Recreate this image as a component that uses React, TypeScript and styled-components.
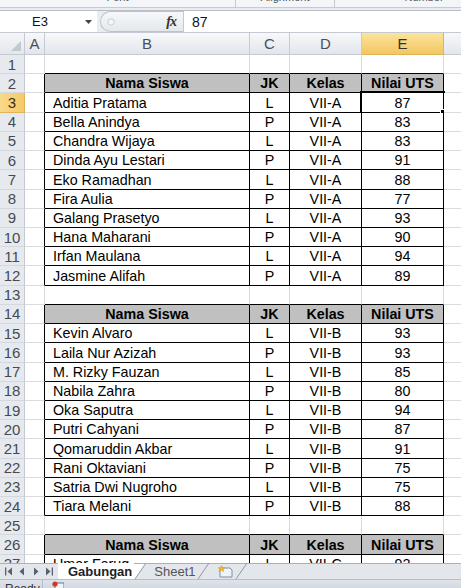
import React from "react";
import styled, { createGlobalStyle } from "styled-components";

const GlobalStyle = createGlobalStyle`
  html, body {
    margin: 0;
    padding: 0;
    background: #fff;
  }
  body {
    font-family: "Liberation Sans", Arial, sans-serif;
  }
`;

type RowKind = "blank" | "head" | "data";

interface SheetRow {
  kind: RowKind;
  cells?: string[];
}

const HEAD = ["Nama Siswa", "JK", "Kelas", "Nilai UTS"];

const kelasA: [string, string, string][] = [
  ["Aditia Pratama", "L", "87"],
  ["Bella Anindya", "P", "83"],
  ["Chandra Wijaya", "L", "83"],
  ["Dinda Ayu Lestari", "P", "91"],
  ["Eko Ramadhan", "L", "88"],
  ["Fira Aulia", "P", "77"],
  ["Galang Prasetyo", "L", "93"],
  ["Hana Maharani", "P", "90"],
  ["Irfan Maulana", "L", "94"],
  ["Jasmine Alifah", "P", "89"],
];

const kelasB: [string, string, string][] = [
  ["Kevin Alvaro", "L", "93"],
  ["Laila Nur Azizah", "P", "93"],
  ["M. Rizky Fauzan", "L", "85"],
  ["Nabila Zahra", "P", "80"],
  ["Oka Saputra", "L", "94"],
  ["Putri Cahyani", "P", "87"],
  ["Qomaruddin Akbar", "L", "91"],
  ["Rani Oktaviani", "P", "75"],
  ["Satria Dwi Nugroho", "L", "75"],
  ["Tiara Melani", "P", "88"],
];

const kelasC: [string, string, string][] = [["Umar Faruq", "L", "92"]];

const group = (kelas: string, list: [string, string, string][]): SheetRow[] => [
  { kind: "head", cells: HEAD },
  ...list.map(([nama, jk, nilai]) => ({ kind: "data" as RowKind, cells: [nama, jk, kelas, nilai] })),
];

const rows: SheetRow[] = [
  { kind: "blank" },
  ...group("VII-A", kelasA),
  { kind: "blank" },
  ...group("VII-B", kelasB),
  { kind: "blank" },
  ...group("VII-C", kelasC),
];

const COLS = ["A", "B", "C", "D", "E", "F"];
const SEL_COL = 4;
const SEL_ROW = 3;

const GRID = "#d9dbde";
const EDGE = "#000";

/* ---------- frame ---------- */

const Window = styled.div`
  width: 461px;
  height: 588px;
  overflow: hidden;
  display: flex;
  flex-direction: column;
  background: #fff;
`;

const RibbonEdge = styled.div`
  height: 7px;
  flex: none;
  display: flex;
  overflow: hidden;
  background: #f3f5f8;
  border-bottom: 1px solid #c5cbd3;
`;

const RibbonGroup = styled.div<{ $w: number }>`
  width: ${(p) => p.$w}px;
  flex: none;
  margin-top: -9px;
  border-right: 1px solid #c4cad2;
  text-align: center;
  font-size: 11px;
  line-height: 12px;
  color: #4c5563;
`;

const FormulaWrap = styled.div`
  flex: none;
  padding-top: 2px;
  background: #e9edf2;
`;

const FormulaBar = styled.div`
  height: 21px;
  display: flex;
  border-top: 1px solid #b8bfc9;
  border-bottom: 1px solid #c5cad2;
  background: #e9edf2;
  font-size: 13px;
  color: #111;
`;

const NameBox = styled.div`
  width: 97px;
  flex: none;
  box-sizing: border-box;
  display: flex;
  align-items: center;
  padding: 0 5px 0 32px;
  background: #fff;
`;

const NameArrow = styled.svg`
  margin-left: auto;
`;

const FxPanel = styled.div`
  width: 83px;
  flex: none;
  box-sizing: border-box;
  margin-left: 3px;
  display: flex;
  align-items: center;
  justify-content: space-between;
  padding: 0 7px 0 5px;
  border: 1px solid #bcc3cc;
  border-right: none;
  border-radius: 11px 0 0 11px;
  background: linear-gradient(#f7f8fa, #e4e8ed);
`;

const FxLabel = styled.span`
  font-family: "Liberation Serif", "Times New Roman", serif;
  font-style: italic;
  font-weight: bold;
  font-size: 14px;
  color: #333;
  letter-spacing: -1px;
`;

const FormulaInput = styled.div`
  flex: 1;
  display: flex;
  align-items: center;
  padding-left: 8px;
  background: #fff;
  border-left: 1px solid #c5cad2;
  font-size: 14px;
`;

/* ---------- sheet ---------- */

const Sheet = styled.div`
  height: 530px;
  flex: none;
  overflow: hidden;
`;

const Grid = styled.div`
  display: grid;
  grid-template-columns: 25px 20px 205px 40px 72px 82px 60px;
  grid-template-rows: 22px;
  grid-auto-rows: 19.23px;
  width: 484px;
`;

const Corner = styled.div`
  box-sizing: border-box;
  display: flex;
  align-items: flex-end;
  justify-content: flex-end;
  padding: 0 3px 3px 0;
  background: linear-gradient(#f5f6f8, #e3e7ec);
  border-right: 1px solid #c5cad2;
  border-bottom: 1px solid #c5cad2;
`;

const ColHead = styled.div<{ $sel?: boolean }>`
  box-sizing: border-box;
  display: flex;
  align-items: center;
  justify-content: center;
  font-size: 15px;
  color: ${(p) => (p.$sel ? "#3a3020" : "#4a4f57")};
  background: ${(p) =>
    p.$sel ? "linear-gradient(#fbe49c, #f3c662)" : "linear-gradient(#f7f8fa, #e2e6ec)"};
  border-right: 1px solid ${(p) => (p.$sel ? "#e2b458" : "#c5cad2")};
  border-bottom: 1px solid ${(p) => (p.$sel ? "#e2b458" : "#c5cad2")};
`;

const RowHead = styled.div<{ $sel?: boolean }>`
  box-sizing: border-box;
  display: flex;
  align-items: center;
  justify-content: center;
  font-size: 15px;
  color: ${(p) => (p.$sel ? "#3a3020" : "#454a52")};
  background: ${(p) => (p.$sel ? "linear-gradient(90deg, #f9d98a, #f5ca68)" : "#e6eaef")};
  border-right: 1px solid ${(p) => (p.$sel ? "#e2b458" : "#c5cad2")};
  border-bottom: 1px solid ${(p) => (p.$sel ? "#e2b458" : "#d3d8df")};
`;

const Cell = styled.div<{
  $align: "left" | "center";
  $head?: boolean;
  $right: string;
  $bottom: string;
}>`
  position: relative;
  box-sizing: border-box;
  display: flex;
  align-items: flex-end;
  justify-content: ${(p) => (p.$align === "left" ? "flex-start" : "center")};
  padding-left: ${(p) => (p.$align === "left" ? "8px" : "0")};
  font-size: 14.3px;
  line-height: 17px;
  font-weight: ${(p) => (p.$head ? "bold" : "normal")};
  color: #000;
  white-space: nowrap;
  background: ${(p) => (p.$head ? "#c0c0c0" : "#fff")};
  border-right: 1px solid ${(p) => p.$right};
  border-bottom: 1px solid ${(p) => p.$bottom};
`;

const Selection = styled.div`
  position: absolute;
  top: -2px;
  left: -2px;
  right: -2px;
  bottom: -2px;
  border: 2px solid #000;
  box-shadow: inset 0 0 0 1px #fff;
  pointer-events: none;
`;

const FillHandle = styled.div`
  position: absolute;
  right: -4px;
  bottom: -4px;
  width: 5px;
  height: 5px;
  background: #000;
  border: 1px solid #fff;
`;

/* ---------- tabs & status ---------- */

const TabBar = styled.div`
  height: 16px;
  flex: none;
  display: flex;
  align-items: stretch;
  background: #e3e7ec;
  border-bottom: 1px solid #b7bec8;
  font-size: 13px;
`;

const NavGroup = styled.div`
  width: 58px;
  flex: none;
  display: flex;
  align-items: center;
  justify-content: space-around;
  padding: 0 2px;
  box-sizing: border-box;
  border-top: 1px solid #a9b1bc;
`;

const Tab = styled.div<{ $active?: boolean }>`
  display: flex;
  align-items: center;
  padding: 0 2px 0 ${(p) => (p.$active ? "10px" : "8px")};
  background: ${(p) => (p.$active ? "#fff" : "transparent")};
  font-weight: ${(p) => (p.$active ? "bold" : "normal")};
  color: ${(p) => (p.$active ? "#222" : "#555")};
  border-top: 1px solid ${(p) => (p.$active ? "#fff" : "#a9b1bc")};
  margin-top: ${(p) => (p.$active ? "-1px" : "0")};
`;

const TabGap = styled.div`
  flex: 1;
  border-top: 1px solid #a9b1bc;
`;

const Slant = styled.svg`
  flex: none;
  display: block;
`;

const StatusBar = styled.div`
  height: 8px;
  flex: none;
  display: flex;
  overflow: hidden;
  background: linear-gradient(#dfe4ea, #d3d9e1);
  font-size: 12px;
  color: #333;
`;

const StatusText = styled.div`
  width: 43px;
  flex: none;
  padding: 2px 0 0 5px;
  box-sizing: border-box;
  border-right: 1px solid #b4bcc6;
`;

const StatusIcon = styled.svg`
  margin: 1px 0 0 9px;
`;

const TabSlant = ({ fill }: { fill: string }) => (
  <Slant width="12" height="16" viewBox="0 0 12 16">
    <polygon points="0,0 12,0 1,16 0,16" fill={fill} />
    <line x1="0" y1="0.5" x2="12" y2="0.5" stroke="#a9b1bc" strokeWidth="1" />
    <line x1="1" y1="16" x2="12" y2="0" stroke="#8e98a5" strokeWidth="1" />
  </Slant>
);

const NavArrow = ({ dir, bar }: { dir: "l" | "r"; bar?: boolean }) => (
  <svg width="8" height="9" viewBox="0 0 8 9">
    {dir === "l" ? (
      <>
        {bar && <rect x="0" y="0.5" width="1.3" height="8" fill="#5a6270" />}
        <polygon points={bar ? "7,0.5 2.5,4.5 7,8.5" : "6,0.5 1.5,4.5 6,8.5"} fill="#5a6270" />
      </>
    ) : (
      <>
        <polygon points={bar ? "1,0.5 5.5,4.5 1,8.5" : "2,0.5 6.5,4.5 2,8.5"} fill="#5a6270" />
        {bar && <rect x="6.7" y="0.5" width="1.3" height="8" fill="#5a6270" />}
      </>
    )}
  </svg>
);

const inTable = (r: number) => {
  const row = rows[r - 1];
  return !!row && row.kind !== "blank";
};

const App: React.FC = () => {
  return (
    <>
      <GlobalStyle />
      <Window>
        <RibbonEdge>
          <RibbonGroup $w={235}>Font</RibbonGroup>
          <RibbonGroup $w={98}>Alignment</RibbonGroup>
          <RibbonGroup $w={178}>Number</RibbonGroup>
        </RibbonEdge>

        <FormulaWrap>
          <FormulaBar>
            <NameBox>
              E3
              <NameArrow width="7" height="4" viewBox="0 0 7 4">
                <polygon points="0,0 7,0 3.5,4" fill="#444" />
              </NameArrow>
            </NameBox>
            <FxPanel>
              <svg width="10" height="10" viewBox="0 0 10 10">
                <circle cx="5" cy="5" r="3.2" fill="#f4f6f8" stroke="#c8ced6" />
              </svg>
              <FxLabel>fx</FxLabel>
            </FxPanel>
            <FormulaInput>87</FormulaInput>
          </FormulaBar>
        </FormulaWrap>

        <Sheet>
          <Grid>
            <Corner>
              <svg width="10" height="10" viewBox="0 0 10 10">
                <polygon points="10,0 10,10 0,10" fill="#c3c8cf" />
              </svg>
            </Corner>
            {COLS.map((c, i) => (
              <ColHead key={c} $sel={i === SEL_COL}>
                {c}
              </ColHead>
            ))}

            {rows.map((row, idx) => {
              const r = idx + 1;
              const table = inTable(r);
              const next = inTable(r + 1);
              return (
                <React.Fragment key={r}>
                  <RowHead $sel={r === SEL_ROW}>{r}</RowHead>
                  {COLS.map((_, c) => {
                    const tcol = c >= 1 && c <= 4;
                    const right = (tcol || c === 0) && table ? EDGE : GRID;
                    const bottom = tcol && (table || next) ? EDGE : GRID;
                    const text = tcol && row.cells ? row.cells[c - 1] : "";
                    const selected = r === SEL_ROW && c === SEL_COL;
                    return (
                      <Cell
                        key={c}
                        $align={c === 1 && row.kind === "data" ? "left" : "center"}
                        $head={tcol && row.kind === "head"}
                        $right={right}
                        $bottom={bottom}
                      >
                        {text}
                        {selected && (
                          <Selection>
                            <FillHandle />
                          </Selection>
                        )}
                      </Cell>
                    );
                  })}
                </React.Fragment>
              );
            })}
          </Grid>
        </Sheet>

        <TabBar>
          <NavGroup>
            <NavArrow dir="l" bar />
            <NavArrow dir="l" />
            <NavArrow dir="r" />
            <NavArrow dir="r" bar />
          </NavGroup>
          <Tab $active>Gabungan</Tab>
          <TabSlant fill="#fff" />
          <Tab>Sheet1</Tab>
          <TabSlant fill="#e3e7ec" />
          <Tab>
            <svg width="16" height="13" viewBox="0 0 16 13">
              <path d="M3 3 H13 L15 5 V12 H3 Z" fill="#eef3fa" stroke="#7d8ea6" strokeWidth="1" />
              <path d="M4.5 0.5 L5.6 2.6 L7.8 2.8 L6.1 4.2 L6.7 6.4 L4.5 5.2 L2.3 6.4 L2.9 4.2 L1.2 2.8 L3.4 2.6 Z" fill="#f2b53a" stroke="#d8921e" strokeWidth="0.5" />
            </svg>
          </Tab>
          <TabSlant fill="#e3e7ec" />
          <TabGap />
        </TabBar>

        <StatusBar>
          <StatusText>Ready</StatusText>
          <StatusIcon width="12" height="12" viewBox="0 0 12 12">
            <rect x="3" y="2" width="9" height="9" fill="#eef3fa" stroke="#5d79a8" />
            <circle cx="3" cy="3" r="2.6" fill="#d8342a" />
          </StatusIcon>
        </StatusBar>
      </Window>
    </>
  );
};

export default App;
